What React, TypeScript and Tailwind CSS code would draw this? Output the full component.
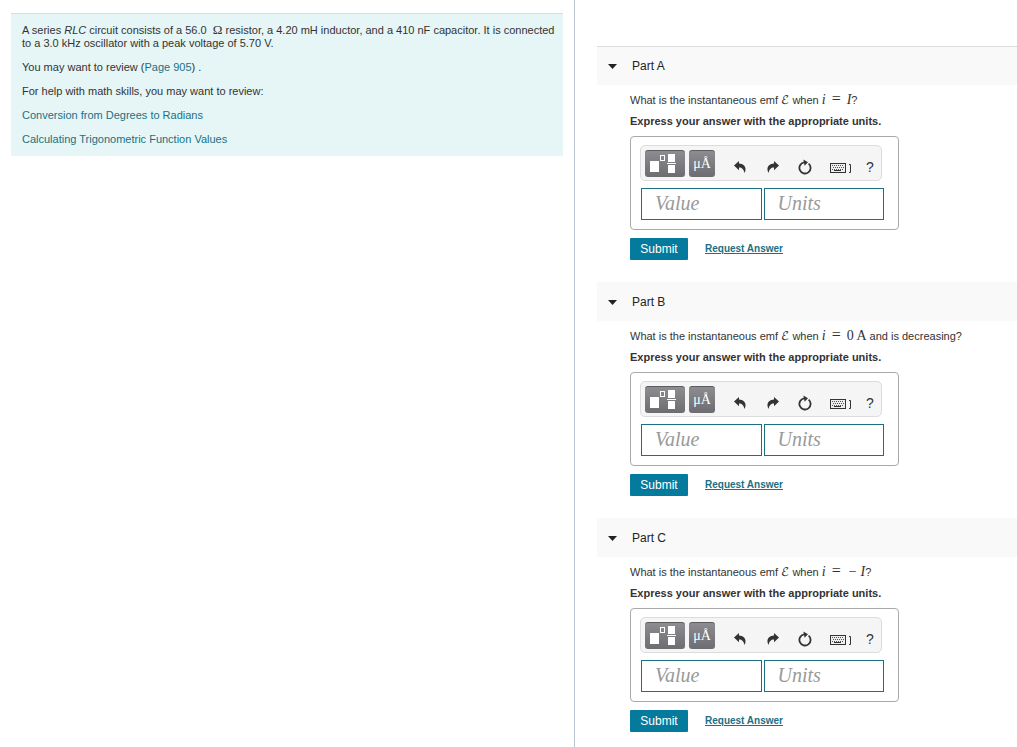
import React, { useState } from 'react';

interface Part {
  id: string;
  label: string;
  condition: React.ReactNode;
}

const MathText: React.FC<{ italic?: boolean; children: React.ReactNode }> = ({ italic, children }) => (
  <span
    className={
      italic
        ? "font-['Liberation_Serif',serif] text-[14px] leading-none italic"
        : "font-['Liberation_Serif',serif] text-[14px] leading-none"
    }
  >
    {children}
  </span>
);

const Equals = () => <span className="mx-1.5 font-['Liberation_Serif',serif] text-[16px] leading-none">=</span>;

const parts: Part[] = [
  {
    id: 'a',
    label: 'Part A',
    condition: (
      <>
        <MathText italic>I</MathText>?
      </>
    ),
  },
  {
    id: 'b',
    label: 'Part B',
    condition: (
      <>
        <MathText>0 A</MathText> and is decreasing?
      </>
    ),
  },
  {
    id: 'c',
    label: 'Part C',
    condition: (
      <>
        <span className="mr-1 ml-0.5">
          <MathText>−</MathText>
        </span>
        <MathText italic>I</MathText>?
      </>
    ),
  },
];

const TemplatesIcon = () => (
  <svg width="26" height="20" viewBox="0 0 26 20" className="mr-1" aria-hidden="true">
    <rect x="0" y="7" width="9" height="11" fill="#fff" />
    <rect x="10.5" y="1.5" width="4" height="5" fill="none" stroke="#fff" />
    <rect x="18" y="0" width="7" height="8" fill="#fff" />
    <rect x="17" y="9" width="9" height="1" fill="#fff" />
    <rect x="18" y="11" width="7" height="8" fill="#fff" />
  </svg>
);

const UndoIcon = () => (
  <svg width="12" height="12" viewBox="0 0 12 12" fill="#333" aria-hidden="true">
    <path d="M5 0 L0 4.6 L5 9.2 V6.6 C7.8 6.5 9.4 7.8 10.5 12 C13.2 7 10.4 2.6 5 2.5 Z" />
  </svg>
);

const RedoIcon = () => (
  <svg width="12" height="12" viewBox="0 0 12 12" fill="#333" aria-hidden="true">
    <path d="M7 0 L12 4.6 L7 9.2 V6.6 C4.2 6.5 2.6 7.8 1.5 12 C-1.2 7 1.6 2.6 7 2.5 Z" />
  </svg>
);

const ResetIcon = () => (
  <svg width="14" height="16" viewBox="0 0 14 16" aria-hidden="true">
    <path d="M10.6 4.6 A5.6 5.6 0 1 1 6 3.4" fill="none" stroke="#333" strokeWidth="1.8" />
    <path d="M5.4 0.5 L10 3.2 L6.6 6.8 Z" fill="#333" />
  </svg>
);

const KeyboardIcon = () => (
  <svg width="22" height="12" viewBox="0 0 22 12" aria-hidden="true">
    <rect x="0.5" y="1.5" width="15" height="9" fill="#eee" stroke="#333" />
    <path d="M2 3.5H14M3 5.5H14M2 7.5H14" stroke="#555" strokeDasharray="1 1" />
    <path d="M4 8.5H11" stroke="#333" />
    <path d="M19 2.5H20.5V10.5H19" fill="none" stroke="#333" />
  </svg>
);

const toolButton =
  'flex h-[27px] justify-center rounded-[3px] border-t border-[#5c5c60] bg-linear-to-b from-[#8c8c91] to-[#6c6c71] text-white';

const AnswerBox: React.FC<{ part: Part }> = ({ part }) => {
  const [value, setValue] = useState('');
  const [units, setUnits] = useState('');

  const inputClass =
    "h-8 min-w-0 flex-1 border border-[#1b7084] bg-white px-[13px] pb-0.5 font-['Liberation_Serif',serif] text-[20px] italic leading-6 placeholder:text-[#999] focus:outline-none";

  return (
    <div className="mt-1 w-[269px] max-w-full rounded-[4px] border border-[#a9a9a9] px-[9px] pt-2 pb-[9px]">
      <div className="mr-[7px] flex h-9 rounded-[5px] border border-[#dcdcdc] bg-[#f5f5f5] pl-1">
        <button type="button" aria-label="Templates" className={`${toolButton} mt-1 w-10 items-center`}>
          <TemplatesIcon />
        </button>
        <button
          type="button"
          aria-label="Units symbols"
          className={`${toolButton} mt-1 ml-1 w-[26px] items-start font-['Liberation_Serif',serif] text-[14px] leading-[26px]`}
        >
          μÅ
        </button>
        <button type="button" aria-label="Undo" className="ml-[9px] flex w-8 items-center justify-center pt-2">
          <UndoIcon />
        </button>
        <button type="button" aria-label="Redo" className="flex w-[33px] items-center justify-center pt-2">
          <RedoIcon />
        </button>
        <button type="button" aria-label="Reset" className="flex w-8 items-center justify-center pt-2">
          <ResetIcon />
        </button>
        <button type="button" aria-label="Keyboard shortcuts" className="flex w-[39px] items-center justify-center pt-2.5">
          <KeyboardIcon />
        </button>
        <button type="button" aria-label="Help" className="flex w-5 items-center justify-center pt-2 text-[14px] text-[#333]">
          ?
        </button>
      </div>
      <div className="mt-[7px] mr-[5px] ml-px flex gap-0.5">
        <input
          id={`value-${part.id}`}
          aria-label={`${part.label} value`}
          placeholder="Value"
          className={inputClass}
          value={value}
          onChange={e => setValue(e.target.value)}
        />
        <input
          id={`units-${part.id}`}
          aria-label={`${part.label} units`}
          placeholder="Units"
          className={inputClass}
          value={units}
          onChange={e => setUnits(e.target.value)}
        />
      </div>
    </div>
  );
};

const PartSection: React.FC<{ part: Part; first: boolean }> = ({ part, first }) => {
  const [open, setOpen] = useState(true);

  return (
    <section>
      <h2>
        <button
          type="button"
          aria-expanded={open}
          onClick={() => setOpen(!open)}
          className={
            first
              ? 'flex h-[39px] w-full items-center border-t border-[#ddd] bg-[#f9f9f9] pl-[11px] text-left text-[12px] text-[#222]'
              : 'flex h-[39px] w-full items-center border-t border-[#f9f9f9] bg-[#f9f9f9] pl-[11px] text-left text-[12px] text-[#222]'
          }
        >
          <svg width="9" height="5" viewBox="0 0 9 5" className="mr-[15px]" aria-hidden="true">
            <path d="M0 0H9L4.5 5Z" fill="#222" />
          </svg>
          {part.label}
        </button>
      </h2>
      {open && (
        <form className="pt-[5px] pb-[22px] pl-[33px]" onSubmit={e => e.preventDefault()}>
          <p className="h-5 leading-5">
            What is the instantaneous emf{' '}
            <span className="font-['DejaVu_Math_TeX_Gyre','DejaVu_Sans',serif] text-[12px] leading-none">ℰ</span> when{' '}
            <MathText italic>i</MathText>
            <Equals />
            {part.condition}
          </p>
          <p className="leading-[22px] font-bold">Express your answer with the appropriate units.</p>
          <AnswerBox part={part} />
          <div className="mt-2 flex items-start gap-[17px]">
            <button type="submit" className="h-[22px] w-[58px] rounded-[1px] bg-[#047a9c] text-[12px] text-white">
              Submit
            </button>
            <a href="#answer" className="text-[10px] leading-[22px] font-bold text-[#1b7084] underline">
              Request Answer
            </a>
          </div>
        </form>
      )}
    </section>
  );
};

const App: React.FC = () => {
  return (
    <main className="grid min-h-screen grid-cols-[575fr_442fr] bg-white font-['Liberation_Sans',Arial,sans-serif] text-[11px] text-[#333]">
      <div className="border-r border-[#b8c4d0] pt-[13px] pr-[11px] pl-[11px]">
        <div className="space-y-[11px] border-t border-[#cfe0e0] bg-[#e6f6f6] pt-[9px] pr-1 pb-2.5 pl-[11px] leading-[13px]">
          <p>
            A series <i>RLC</i> circuit consists of a 56.0 &nbsp;
            <span className="font-['Liberation_Serif',serif] text-[13px] leading-none">Ω</span> resistor, a 4.20 mH inductor, and a 410 nF
            capacitor. It is connected to a 3.0 kHz oscillator with a peak voltage of 5.70 V.
          </p>
          <p>
            You may want to review (
            <a href="#page-905" className="text-[#1b7084]">
              Page 905
            </a>
            ) .
          </p>
          <p>For help with math skills, you may want to review:</p>
          <p>
            <a href="#radians" className="text-[#1b7084]">
              Conversion from Degrees to Radians
            </a>
          </p>
          <p>
            <a href="#trig" className="text-[#1b7084]">
              Calculating Trigonometric Function Values
            </a>
          </p>
        </div>
      </div>
      <div className="h-screen overflow-hidden pt-[46px] pl-[22px]">
        {parts.map((part, index) => (
          <PartSection key={part.id} part={part} first={index === 0} />
        ))}
      </div>
    </main>
  );
};

export default App;
